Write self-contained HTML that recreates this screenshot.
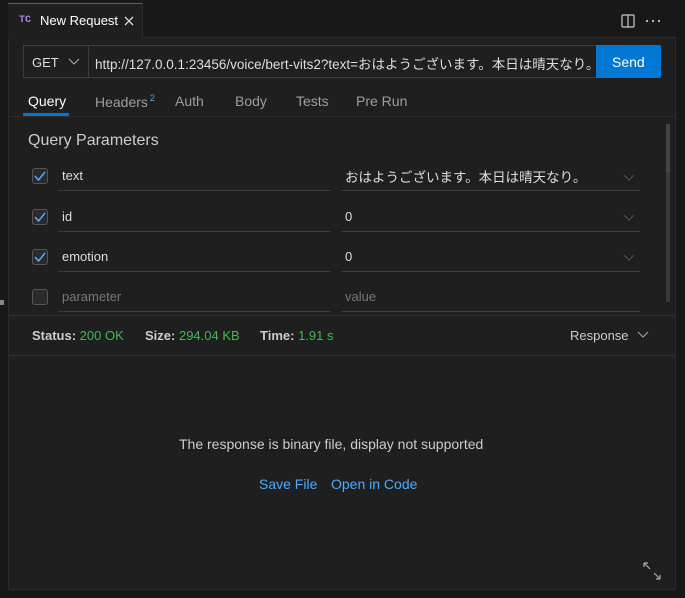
<!DOCTYPE html>
<html><head><meta charset="utf-8"><style>
*{box-sizing:border-box;margin:0;padding:0}
body{width:685px;height:598px;background:#181818;font-family:"Liberation Sans","Noto Sans CJK JP",sans-serif;color:#ccc;font-size:13px;position:relative;overflow:hidden}
.abs{position:absolute}
.panel{left:8px;top:38px;width:668px;height:552px;background:#1f1f1f;border-left:1px solid #2b2b2b;border-right:1px solid #2b2b2b;border-bottom:1px solid #2b2b2b}
.topline{left:8px;top:37px;width:668px;height:1px;background:#2b2b2b}
.tab{left:8px;top:3px;width:135px;height:35px;background:#1f1f1f;border-top:1px solid #0078d4;border-right:1px solid #2b2b2b}
.uline{height:1px;background:#3c3c3c}
.chk{width:16px;height:16px;border:1px solid #555;border-radius:3px;background:#2a2a2a}
.t{position:absolute;white-space:nowrap}
.g{color:#3fb950}
</style></head><body>
<div class="abs panel"></div>
<div class="abs topline"></div>
<div class="abs tab"></div>
<div class="t" style="left:19px;top:15px;font-size:10px;font-weight:bold;color:#b180d7;font-family:'Liberation Mono',monospace">TC</div>
<div class="t" style="left:40px;top:13px;color:#fff;font-size:13px">New Request</div>
<svg class="abs" style="left:124px;top:16px" width="10" height="10"><path d="M1 1L9 9M9 1L1 9" stroke="#ddd" stroke-width="1.3"/></svg>
<svg class="abs" style="left:621px;top:14px" width="14" height="14"><rect x="1" y="1" width="12" height="12" rx="1" fill="none" stroke="#ccc" stroke-width="1.2"/><path d="M7 1V13" stroke="#ccc" stroke-width="1.2"/></svg>
<svg class="abs" style="left:645px;top:19px" width="16" height="4"><circle cx="2" cy="2" r="1.1" fill="#ccc"/><circle cx="8" cy="2" r="1.1" fill="#ccc"/><circle cx="14" cy="2" r="1.1" fill="#ccc"/></svg>
<div class="abs" style="left:23px;top:45px;width:574px;height:33px;border:1px solid #3c3c3c;background:#1f1f1f"></div>
<div class="abs" style="left:88px;top:45px;width:1px;height:33px;background:#3c3c3c"></div>
<div class="t" style="left:32px;top:55px;font-size:13px;color:#ddd">GET</div>
<svg class="abs" style="left:68px;top:58px" width="12" height="8"><path d="M1 1L6 6L11 1" fill="none" stroke="#aaa" stroke-width="1.1"/></svg>
<div class="t" style="left:95px;top:53px;width:501px;overflow:hidden;font-size:13.5px;color:#ddd">http://127.0.0.1:23456/voice/bert-vits2?text=おはようございます。本日は晴天なり。&amp;id=0</div>
<div class="abs" style="left:596px;top:45px;width:65px;height:33px;background:#0078d4;border-radius:0 2px 2px 0"></div>
<div class="t" style="left:612px;top:54px;color:#fff;font-size:14px">Send</div>
<div class="t" style="left:28px;top:93px;color:#fff;font-size:14px">Query</div>
<div class="abs" style="left:23px;top:113px;width:46px;height:3px;background:#0078d4"></div>
<div class="t" style="left:95px;top:93px;color:#9d9d9d;font-size:14px">Headers<sup style="color:#4daafc;font-size:9px;margin-left:2px;vertical-align:6px">2</sup></div>
<div class="t" style="left:175px;top:93px;color:#9d9d9d;font-size:14px">Auth</div>
<div class="t" style="left:235px;top:93px;color:#9d9d9d;font-size:14px">Body</div>
<div class="t" style="left:296px;top:93px;color:#9d9d9d;font-size:14px">Tests</div>
<div class="t" style="left:356px;top:93px;color:#9d9d9d;font-size:14px">Pre Run</div>
<div class="abs uline" style="left:9px;top:116px;width:666px;background:#2b2b2b"></div>
<div class="abs" style="left:666px;top:124px;width:4px;height:48px;background:#444"></div>
<div class="abs" style="left:666px;top:172px;width:4px;height:130px;background:#3a3a3a"></div>
<div class="t" style="left:28px;top:132px;color:#ccc;font-size:16px">Query Parameters</div>

<div class="abs chk" style="left:32px;top:168px"></div>
<div class="abs chk" style="left:32px;top:209px"></div>
<div class="abs chk" style="left:32px;top:249px"></div>
<div class="abs chk" style="left:32px;top:289px"></div>
<svg class="abs" style="left:33px;top:169px" width="14" height="14"><path d="M2 7L5.5 11L12 3" fill="none" stroke="#4daafc" stroke-width="1.6"/></svg>
<svg class="abs" style="left:33px;top:210px" width="14" height="14"><path d="M2 7L5.5 11L12 3" fill="none" stroke="#4daafc" stroke-width="1.6"/></svg>
<svg class="abs" style="left:33px;top:250px" width="14" height="14"><path d="M2 7L5.5 11L12 3" fill="none" stroke="#4daafc" stroke-width="1.6"/></svg>
<div class="t" style="left:62px;top:168px;color:#ddd">text</div>
<div class="t" style="left:62px;top:209px;color:#ddd">id</div>
<div class="t" style="left:62px;top:249px;color:#ddd">emotion</div>
<div class="t" style="left:62px;top:289px;color:#777">parameter</div>
<div class="t" style="left:345px;top:166px;color:#ddd;font-size:13.5px">おはようございます。本日は晴天なり。</div>
<div class="t" style="left:345px;top:209px;color:#ddd">0</div>
<div class="t" style="left:345px;top:249px;color:#ddd">0</div>
<div class="t" style="left:345px;top:289px;color:#777">value</div>
<div class="abs uline" style="left:58px;top:190px;width:273px"></div>
<div class="abs uline" style="left:341px;top:190px;width:299px"></div>
<div class="abs uline" style="left:58px;top:231px;width:273px"></div>
<div class="abs uline" style="left:341px;top:231px;width:299px"></div>
<div class="abs uline" style="left:58px;top:271px;width:273px"></div>
<div class="abs uline" style="left:341px;top:271px;width:299px"></div>
<div class="abs uline" style="left:58px;top:311px;width:273px"></div>
<div class="abs uline" style="left:341px;top:311px;width:299px"></div>
<svg class="abs" style="left:623px;top:174px" width="12" height="8"><path d="M1 1L6 6L11 1" fill="none" stroke="#555" stroke-width="1"/></svg>
<svg class="abs" style="left:623px;top:214px" width="12" height="8"><path d="M1 1L6 6L11 1" fill="none" stroke="#555" stroke-width="1"/></svg>
<svg class="abs" style="left:623px;top:254px" width="12" height="8"><path d="M1 1L6 6L11 1" fill="none" stroke="#555" stroke-width="1"/></svg>
<div class="abs" style="left:0;top:300px;width:4px;height:5px;background:#888"></div>

<div class="abs uline" style="left:9px;top:315px;width:666px;background:#333"></div>
<div class="t" style="left:32px;top:328px;font-weight:bold;color:#ccc">Status: <span class="g" style="font-weight:normal">200 OK</span></div>
<div class="t" style="left:145px;top:328px;font-weight:bold;color:#ccc">Size: <span class="g" style="font-weight:normal">294.04 KB</span></div>
<div class="t" style="left:260px;top:328px;font-weight:bold;color:#ccc">Time: <span class="g" style="font-weight:normal">1.91 s</span></div>
<div class="t" style="left:570px;top:328px;color:#ccc">Response</div>
<svg class="abs" style="left:637px;top:331px" width="12" height="8"><path d="M1 1L6 6L11 1" fill="none" stroke="#aaa" stroke-width="1"/></svg>
<div class="abs uline" style="left:9px;top:355px;width:666px;background:#333"></div>

<div class="t" style="left:179px;top:436px;color:#ccc;font-size:14px">The response is binary file, display not supported</div>
<div class="t" style="left:259px;top:476px;color:#4daafc;font-size:14px">Save File</div>
<div class="t" style="left:331px;top:476px;color:#4daafc;font-size:14px">Open in Code</div>
<svg class="abs" style="left:642px;top:561px" width="20" height="20"><path d="M2 2L8 8M2 2H6M2 2V6M18 18L12 12M18 18H14M18 18V14" fill="none" stroke="#aaa" stroke-width="1.2"/></svg>
</body></html>
